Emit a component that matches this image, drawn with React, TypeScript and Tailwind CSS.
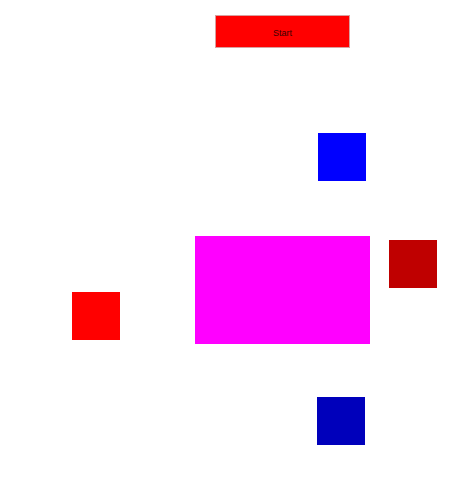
import React from "react";

type Block = { id: string; left: number; top: number; w: number; h: number; color: string };

// positions on the play field are the content itself
const blocks: Block[] = [
  { id: "blue", left: 318, top: 133, w: 48, h: 48, color: "bg-[#0000ff]" },
  { id: "target", left: 195, top: 236, w: 175, h: 108, color: "bg-[#ff00ff]" },
  { id: "darkred", left: 389, top: 240, w: 48, h: 48, color: "bg-[#bf0000]" },
  { id: "red", left: 72, top: 292, w: 48, h: 48, color: "bg-[#ff0000]" },
  { id: "darkblue", left: 317, top: 397, w: 48, h: 48, color: "bg-[#0000bb]" },
];

export default function App() {
  return (
    <div className="relative w-[474px] h-[479px] bg-white overflow-hidden font-['Liberation_Sans',Arial,sans-serif]">
      <div className="pt-[15px] pl-[215px]">
        <button className="w-[135px] h-[33px] bg-[#ff0000] border border-[#d9a0a0] text-[9px] text-[#3a0000] flex items-center justify-center pt-[4px]">
          Start
        </button>
      </div>
      {blocks.map((b) => (
        <div
          key={b.id}
          className={`absolute ${b.color}`}
          style={{ left: b.left, top: b.top, width: b.w, height: b.h }}
        />
      ))}
    </div>
  );
}
